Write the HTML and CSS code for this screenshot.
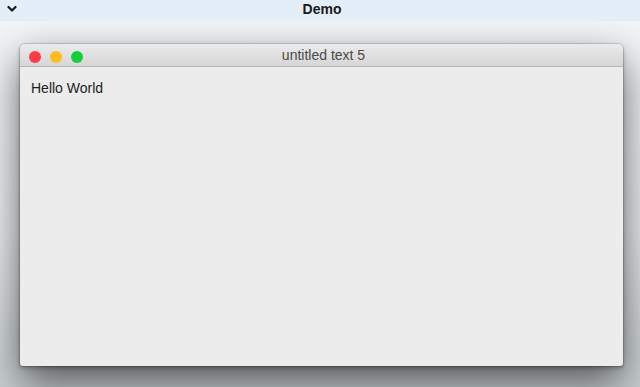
FILE: index.html
```html
<!DOCTYPE html>
<html lang="en">
<head>
  <meta charset="UTF-8" />
  <title>Demo</title>
  <link rel="stylesheet" href="styles.css">
</head>
<body>
  <div class="topbar">
    <svg class="chevron" width="10" height="8" viewBox="0 0 10 8">
      <path d="M1.5 2 L5 5.5 L8.5 2" fill="none" stroke="#1a1a1a" stroke-width="2.2" stroke-linecap="round" stroke-linejoin="round"/>
    </svg>
    <div class="topbar-title">Demo</div>
  </div>

  <div class="stage">
    <div class="window">
      <div class="titlebar">
        <div class="lights">
          <span class="light red"></span>
          <span class="light yellow"></span>
          <span class="light green"></span>
        </div>
        <div class="title">untitled text 5</div>
      </div>
      <div class="content">Hello World</div>
    </div>
  </div>
</body>
</html>
```

FILE: styles.css
```css
html, body {
  margin: 0;
  height: 100%;
}
body {
  font-family: "Liberation Sans", Arial, sans-serif;
  background: linear-gradient(180deg, #f3f6f9 0%, #e9edf0 60%, #c9cfd1 100%);
  overflow: hidden;
}
/* top bar */
.topbar {
  position: relative;
  height: 21px;
  background: #e3eef8;
  display: flex;
  align-items: center;
  justify-content: center;
}
.chevron {
  position: absolute;
  left: 7px; top: 5px;
}
.topbar-title {
  font-size: 14px;
  font-weight: bold;
  color: #1a1a1a;
  padding: 0 0 4px 4px;
}
/* window */
.stage {
  padding: 23px 17px 0 20px;
}
.window {
  width: 603px;
  height: 322px;
  background: #ececec;
  border-radius: 5px 5px 3px 3px;
  box-shadow: 0 0 0 1px rgba(0,0,0,0.12), 0 16px 40px rgba(0,0,0,0.6), 0 2px 4px rgba(0,0,0,0.3);
  display: flex;
  flex-direction: column;
  overflow: hidden;
}
.titlebar {
  position: relative;
  height: 22px;
  background: linear-gradient(180deg, #ebebeb 0%, #d6d6d6 100%);
  border-bottom: 1px solid #b5b5b5;
  display: flex;
  align-items: center;
  justify-content: center;
}
.lights {
  position: absolute;
  left: 9px; top: 7px;
  display: flex;
  gap: 9px;
}
.light {
  width: 12px; height: 12px;
  border-radius: 50%;
}
.red { background: #fc3d48; }
.yellow { background: #fdbb1e; }
.green { background: #15cd3d; }
.title {
  font-size: 14px;
  color: #4a4a4a;
  padding-left: 4px;
}
.content {
  flex: 1;
  padding: 13px 11px;
  font-size: 14px;
  color: #1c1c1c;
}
```
